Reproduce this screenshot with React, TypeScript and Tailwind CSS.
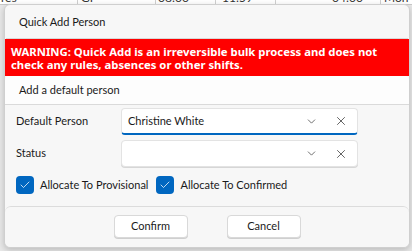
import { ChevronDown, X, Check } from "lucide-react";

const FONT = "font-['Lato','Noto_Sans',sans-serif]";

function ComboBox({ value, focused }: { value?: string; focused?: boolean }) {
  return (
    <div
      className={`flex h-[27px] w-[237px] items-center rounded-[4px] border border-[#e3e3e3] bg-white pl-[6px] ${
        focused ? "border-b-2 border-b-[#0067c0]" : "shadow-[0_1px_0_#d6d6d6]"
      }`}
    >
      <span className="flex-1 text-[11px] text-[#1a1a1a]">{value}</span>
      <ChevronDown className="mr-[16px] size-[13px] text-[#444]" strokeWidth={1.4} aria-hidden />
      <X className="mr-[9px] size-[14px] text-[#333]" strokeWidth={1.3} aria-hidden />
    </div>
  );
}

function CheckItem({ label }: { label: string }) {
  return (
    <label className="flex items-center gap-[6px]">
      <span className="flex size-[18px] items-center justify-center rounded-[4px] bg-[#0067c0]">
        <Check className="size-[12px] text-white" strokeWidth={1.5} aria-hidden />
      </span>
      <span className="text-[11px] text-[#1a1a1a]">{label}</span>
    </label>
  );
}

export default function App() {
  return (
    <div className={`relative h-[251px] w-[412px] overflow-hidden bg-[#e8e8e8] ${FONT}`}>
      {/* table behind the dialog */}
      <div className="flex h-[5px] items-end border-b border-[#c8c8c8] bg-white text-[12px] leading-[12px] text-[#333]">
        <span className="w-[78px] border-r border-[#d0d0d0] pl-[1px]">res</span>
        <span className="w-[78px] border-r border-[#d0d0d0] pl-[3px]">GP</span>
        <span className="w-[60px] border-r border-[#d0d0d0] pl-[2px]">08:00</span>
        <span className="w-[60px] border-r border-[#d0d0d0] pl-[6px]">11:59</span>
        <span className="w-[50px] border-r border-[#d0d0d0]"></span>
        <span className="w-[55px] border-r border-[#d0d0d0] pl-[6px]">04:00</span>
        <span className="pl-[3px]">Mon</span>
      </div>

      <div className="absolute left-[4px] top-[4px] flex h-[244px] w-[406px] flex-col rounded-[6px] border border-[#cfcfcf] bg-[#f7f7f7] shadow-[0_2px_6px_rgba(0,0,0,0.2)]">
        <div className="flex h-[33px] items-center px-[14px] pt-[1px] text-[11px] text-[#1a1a1a]">
          Quick Add Person
        </div>
        <div className="mx-[1px] border-t border-[#d8d8d8]" />
        <div className="h-[37px] bg-[#ff0000] px-[6px] pt-[6px] font-['Noto_Sans',sans-serif] text-[11.3px] font-bold leading-[13px] text-white">
          WARNING: Quick Add is an irreversible bulk process and does not check any rules, absences or other shifts.
        </div>
        <div className="flex h-[29px] items-center rounded-t-[4px] border-b border-[#dadada] bg-[#fdfdfd] px-[14px] text-[11px] text-[#1a1a1a]">
          Add a default person
        </div>
        <div className="flex flex-col gap-[5px] px-[11px] pt-[3px]">
          <div className="flex items-center">
            <span className="w-[105px] text-[11px] text-[#1a1a1a]">Default Person</span>
            <ComboBox value="Christine White" focused />
          </div>
          <div className="flex items-center">
            <span className="w-[105px] text-[11px] text-[#1a1a1a]">Status</span>
            <ComboBox />
          </div>
          <div className="mt-[4px] flex items-center gap-[8px]">
            <CheckItem label="Allocate To Provisional" />
            <CheckItem label="Allocate To Confirmed" />
          </div>
        </div>
        <div className="mt-auto flex h-[41px] items-center justify-center gap-[39px] rounded-[6px] border-t border-[#dcdcdc] bg-[#f7f7f7] pb-[2px]">
          <button className="h-[23px] w-[74px] rounded-[4px] border border-[#d9d9d9] bg-white text-[11px] text-[#1a1a1a] shadow-[0_1px_0_#cfcfcf]">
            Confirm
          </button>
          <button className="h-[23px] w-[74px] rounded-[4px] border border-[#d9d9d9] bg-white text-[11px] text-[#1a1a1a] shadow-[0_1px_0_#cfcfcf]">
            Cancel
          </button>
        </div>
      </div>
    </div>
  );
}
